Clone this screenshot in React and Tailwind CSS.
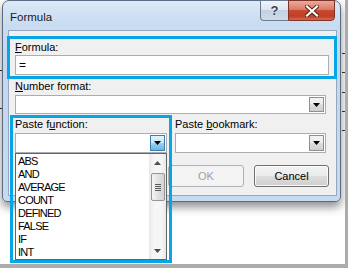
import React from 'react'

const items = ['ABS', 'AND', 'AVERAGE', 'COUNT', 'DEFINED', 'FALSE', 'IF', 'INT']

function Arrow({ up, color = '#000' }) {
  return (
    <svg width="7" height="4" viewBox="0 0 7 4">
      <path d={up ? 'M0 4h7L3.5 0z' : 'M0 0h7L3.5 4z'} fill={color} />
    </svg>
  )
}

function DropButton({ hot }) {
  return (
    <div
      className={`ml-auto flex h-full w-[15px] items-center justify-center border ${
        hot
          ? 'border-[#3c7fb1] bg-[linear-gradient(#e3f3fc,#c6e6f7_50%,#9dd3f0_50%,#6fb6de)]'
          : 'border-[#8e8f8f] bg-[linear-gradient(#f2f2f2,#ebebeb_50%,#dddddd_50%,#cfcfcf)]'
      }`}
    >
      <Arrow />
    </div>
  )
}

function Combo({ className, hot }) {
  return (
    <div className={`flex border border-[#abadb3] bg-white p-px ${className}`}>
      <DropButton hot={hot} />
    </div>
  )
}

function Label({ children, className = '' }) {
  return <div className={`h-[14px] leading-[14px] whitespace-nowrap ${className}`}>{children}</div>
}

export default function App() {
  return (
    <div className="relative h-[268px] w-[348px] overflow-hidden border-r-[3px] border-b-[4px] border-[#acacac] bg-white font-['Liberation_Sans',Arial,sans-serif] text-[11px] text-black">
      {/* table marks of the document behind */}
      {[53, 72, 92, 111, 130].map((y) => (
        <div key={y} className="absolute right-0 h-px w-[3px] bg-[#333]" style={{ top: y }} />
      ))}
      {[70, 108].map((y) => (
        <div key={y} className="absolute left-0 h-px w-[2px] bg-[#333]" style={{ top: y }} />
      ))}

      {/* dialog window */}
      <div className="relative ml-[2px] flex h-[202px] w-[339px] flex-col rounded-t-[7px] rounded-b-[5px] border border-[#5a6c84] bg-[linear-gradient(#dce9f7,#c9dcf2_22px,#c2d7ef_60px,#c6daf1)] shadow-[0_5px_10px_rgba(0,0,0,0.45)]">
        {/* title bar */}
        <div className="flex h-[29px] shrink-0">
          <span className="pl-[7px] pt-[9px] text-[11.5px] leading-[14px] text-[#1a1a1a]">Formula</span>
          <div className="ml-auto mr-[5px] -mt-px flex h-[21px] self-start">
            <div className="flex w-[28px] items-center justify-center rounded-bl-[4px] border border-r-0 border-[#6a7a8f] bg-[linear-gradient(#f1f5fa,#dce5f0_45%,#c4d1e2_50%,#cfdbe9)] text-[13px] font-bold leading-none text-[#34445a] [text-shadow:0_0_2px_#fff]">
              ?
            </div>
            <div className="flex w-[47px] items-center justify-center rounded-br-[4px] border border-[#7d3326] bg-[linear-gradient(#e9aa9c,#da7b68_45%,#c8492f_50%,#c13e25_80%,#d46a4f)]">
              <svg width="14" height="12" viewBox="0 0 14 12">
                <path d="M2 1.5l10 9M12 1.5l-10 9" stroke="#5a1e14" strokeWidth="4" strokeLinecap="square" />
                <path d="M2 1.5l10 9M12 1.5l-10 9" stroke="#fff" strokeWidth="2.2" strokeLinecap="square" />
              </svg>
            </div>
          </div>
        </div>

        {/* client area */}
        <div className="ml-[5px] mr-[3px] mb-[5px] flex flex-1 flex-col border border-[#98a7ba] bg-[#f0f0f0] pl-[6px]">
          <Label className="mt-[9px]">
            <u>F</u>ormula:
          </Label>
          <div className="mt-px flex h-[20px] w-[314px] items-center border border-[#abadb3] bg-white pl-[3px] text-[12px]">
            =
          </div>

          <Label className="mt-[4px]">
            <u>N</u>umber format:
          </Label>
          <Combo className="mt-[2px] h-[19px] w-[311px]" />

          <div className="mt-[3px] flex gap-[8px]">
            <div className="flex w-[152px] flex-col">
              <Label>
                Paste f<u>u</u>nction:
              </Label>
              <Combo className="mt-[2px] h-[20px]" hot />
            </div>
            <div className="flex w-[151px] flex-col">
              <Label>
                Paste <u>b</u>ookmark:
              </Label>
              <Combo className="mt-[2px] h-[20px]" />
            </div>
          </div>

          <div className="mt-[12px] flex justify-end gap-[10px] pr-[7px]">
            <div className="flex h-[22px] w-[76px] items-center justify-center rounded-[3px] border border-[#adb2b5] bg-[#f4f4f4] text-[#a0a0a0]">
              OK
            </div>
            <div className="flex h-[22px] w-[75px] items-center justify-center rounded-[3px] border border-[#707070] bg-[linear-gradient(#f2f2f2,#ebebeb_50%,#dddddd_50%,#cfcfcf)] shadow-[inset_0_0_0_1px_rgba(255,255,255,0.8)]">
              Cancel
            </div>
          </div>
        </div>
      </div>

      {/* open list of Paste function */}
      <div className="absolute left-[15px] top-[153px] h-[107px] w-[152px] overflow-hidden border border-[#646464] bg-white pt-px">
        {items.map((t) => (
          <div key={t} className="h-[13px] pl-[2px] leading-[13px] tracking-[-0.8px]">
            {t}
          </div>
        ))}
        <div className="absolute right-0 top-0 bottom-0 flex w-[17px] flex-col items-center bg-[linear-gradient(90deg,#e9e9e9,#f6f6f6_30%,#f6f6f6_70%,#e9e9e9)]">
          <div className="flex h-[17px] w-full items-center justify-center">
            <Arrow up color="#4d4d4d" />
          </div>
          <div className="mt-[2px] flex h-[28px] w-[14px] flex-col items-center justify-center gap-[1px] rounded-[2px] border border-[#959595] bg-[linear-gradient(90deg,#f5f5f5,#e2e2e2_50%,#d3d3d3)]">
            {[0, 1, 2, 3].map((i) => (
              <div key={i} className="h-px w-[6px] bg-[#5a5a5a]" />
            ))}
          </div>
          <div className="mt-auto flex h-[17px] w-full items-center justify-center">
            <Arrow color="#4d4d4d" />
          </div>
        </div>
      </div>

      {/* blue highlight frames */}
      <div className="absolute left-[7px] top-[36px] h-[43px] w-[330px] border-[3px] border-[#05a5e6]" />
      <div className="absolute left-[10px] top-[115px] h-[148px] w-[162px] border-[3px] border-[#05a5e6]" />
    </div>
  )
}
